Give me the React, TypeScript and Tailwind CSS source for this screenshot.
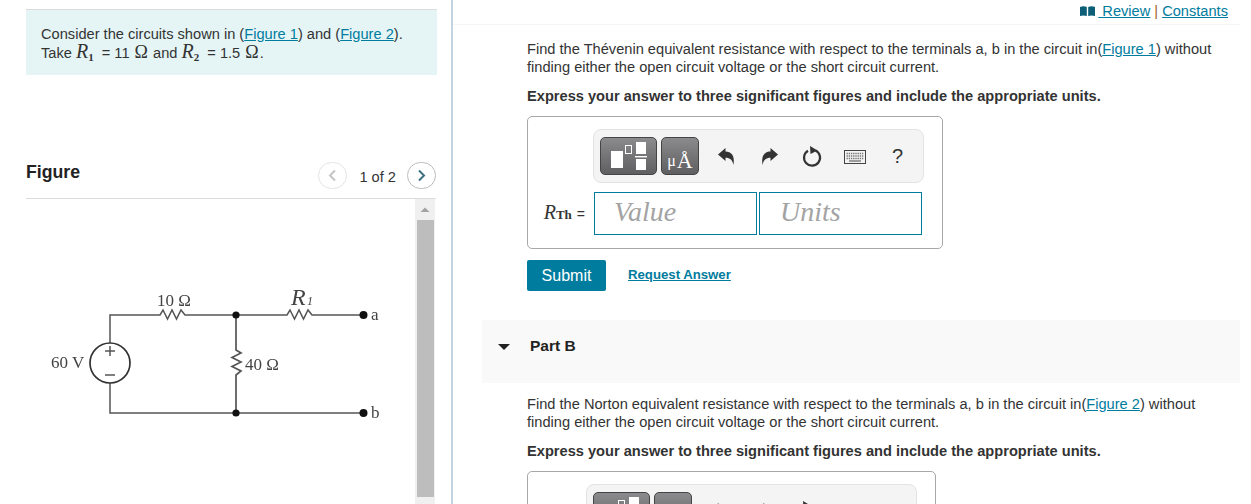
import React from 'react';

const font = { fontFamily: '"Liberation Sans", Arial, sans-serif' };

const Math1: React.FC<{ base: string; sub: string }> = ({ base, sub }) => (
  <span className="mr-[4px] font-['Liberation_Serif',serif] text-[#333]">
    <span className="text-[20px] italic">{base}</span>
    <span className="relative top-[3px] text-[11px] font-semibold">{sub}</span>
  </span>
);

const Ohm = () => <span className="mx-[1px] font-['Liberation_Serif',serif] text-[18px]">Ω</span>;

const UndoIcon = () => (
  <svg width="17" height="17" viewBox="0 0 17 17">
    <path d="M0 6.500 L7.500 0 L7.500 3.500 C13 3.500 17 7 15.500 17 C14.500 12 12 9.800 7.500 9.800 L7.500 13 Z" fill="#333" />
  </svg>
);

const RedoIcon = () => (
  <svg width="17" height="17" viewBox="0 0 17 17">
    <path d="M17 6.500 L9.500 0 L9.500 3.500 C4 3.500 0 7 1.500 17 C2.500 12 5 9.800 9.500 9.800 L9.500 13 Z" fill="#333" />
  </svg>
);

const ResetIcon = () => (
  <svg width="20" height="21" viewBox="0 0 20 21">
    <path d="M6 4.800 A8 8 0 1 0 13.500 4.500" fill="none" stroke="#333" strokeWidth="2.200" />
    <path d="M8 0 L15.500 4.500 L8.500 8 Z" fill="#333" />
  </svg>
);

const KeyboardIcon = () => (
  <svg width="22" height="14" viewBox="0 0 22 14" className="mt-[2px]">
    <rect x="0.500" y="0.500" width="21" height="13" fill="#f4f4f4" stroke="#444" />
    <path d="M2.500 3.500 H19.500 M2.500 6 H19.500 M2.500 8.500 H19.500" stroke="#777" strokeWidth="1.400" strokeDasharray="1.400 0.800" />
    <path d="M5 11 H17" stroke="#777" strokeWidth="1.400" />
  </svg>
);

const TemplateIcon = () => (
  <svg width="36" height="28" viewBox="0 0 36 28">
    <rect x="0" y="9" width="12" height="17" fill="#fff" />
    <rect x="14.500" y="3.500" width="6" height="8" fill="none" stroke="#fff" />
    <rect x="25" y="0" width="10" height="12" fill="#fff" />
    <rect x="24" y="14" width="12" height="1.400" fill="#fff" />
    <rect x="25" y="17" width="10" height="11" fill="#fff" />
  </svg>
);

const AnswerBox: React.FC<{ label?: React.ReactNode; width: string; pad: string }> = ({ label, width, pad }) => (
  <div className={`mt-[11px] h-[133px] shrink-0 rounded-[5px] border border-[#a8a8a8] bg-white ${width}`}>
    <div className={`mt-3 flex h-[54px] w-[331px] items-center rounded-[8px] border border-[#e3e3e3] bg-[#f4f4f4] pl-[6px] ${pad}`}>
      <div className="flex h-[38px] w-[57px] items-center justify-center rounded-[5px] border border-[#444] bg-gradient-to-b from-[#8b8a8d] to-[#5f5e60]">
        <TemplateIcon />
      </div>
      <div className="ml-[4px] flex h-[38px] w-[38px] items-end justify-center gap-[1px] rounded-[5px] border border-[#444] bg-gradient-to-b from-[#8b8a8d] to-[#5f5e60] pb-[3px] font-['Liberation_Serif',serif] text-white">
        <span className="text-[16px] leading-[20px]">μ</span>
        <span className="text-[22px] leading-[20px]">Å</span>
      </div>
      <div className="ml-[19px] flex w-[17px] justify-center"><UndoIcon /></div>
      <div className="ml-[26px] flex w-[17px] justify-center"><RedoIcon /></div>
      <div className="ml-[24px] flex w-[20px] justify-center"><ResetIcon /></div>
      <div className="ml-[22px] flex w-[22px] justify-center"><KeyboardIcon /></div>
      <div className="ml-[26px] text-[20px] leading-none text-[#333]">?</div>
    </div>
    <div className="mt-[9px] flex items-center">
      <div className="flex w-[66px] justify-end pr-[9px] text-[14px]">{label}</div>
      <div className="flex h-[43px] w-[163px] items-center border border-[#007c9e] pb-[3px] pl-[19px] font-['Liberation_Serif',serif] text-[28px] italic text-[#a3a3a3]">Value</div>
      <div className="ml-[2px] flex h-[43px] w-[163px] items-center border border-[#007c9e] pb-[3px] pl-[20px] font-['Liberation_Serif',serif] text-[28px] italic text-[#a3a3a3]">Units</div>
    </div>
  </div>
);

const Link: React.FC<{ children: React.ReactNode; className?: string }> = ({ children, className }) => (
  <a className={`cursor-pointer text-[#007c9e] underline ${className ?? ''}`}>{children}</a>
);

const Circuit = () => (
  <svg width="389" height="305" viewBox="0 0 389 305" className="shrink-0 blur-[0.3px]">
    <g transform="translate(-26,-199)" fill="none" stroke="#555" strokeWidth="1.500">
      <path d="M110 343 V315 H160 l3 -5 l4.500 9 l4.500 -9 l4.500 9 l4.500 -9 l4 5 H287 l3 -5 l4.500 9 l4.500 -9 l4.500 9 l4.500 -9 l4 5 H363" />
      <path d="M236 315 V350 l5 3 l-9 4.500 l9 4.500 l-9 4.500 l9 4.500 l-5 4 V413" strokeWidth="1.700" />
      <path d="M110 383 V413 H363" />
      <circle cx="110" cy="363" r="20" strokeWidth="1.700" stroke="#333" />
      <path d="M110 346 V356 M105 351 H115 M105 375 H115" />
      <circle cx="236" cy="315" r="3.600" fill="#111" stroke="none" />
      <circle cx="236" cy="413" r="3.600" fill="#111" stroke="none" />
      <circle cx="363.500" cy="315" r="4" fill="#111" stroke="none" />
      <circle cx="363.500" cy="413" r="4" fill="#111" stroke="none" />
      <g fill="#444" stroke="none" fontFamily="'Liberation Serif', serif" fontSize="17">
        <text x="157" y="306">10 Ω</text>
        <text x="291" y="305" fontSize="24" fontStyle="italic">R</text>
        <text x="307" y="305" fontSize="12" fontStyle="italic">1</text>
        <text x="371" y="320">a</text>
        <text x="371" y="418">b</text>
        <text x="51" y="368">60 V</text>
        <text x="245" y="370">40 Ω</text>
      </g>
    </g>
  </svg>
);

export default function App() {
  return (
    <div className="flex h-[504px] w-[1251px] overflow-hidden bg-white text-[14.63px] leading-[18px] text-[#333]" style={font}>
      {/* Left column */}
      <div className="h-full w-[453px] shrink-0 border-r-2 border-[#c3d3e2] pl-[26px] pr-[14px] pt-[9px]">
        <div className="h-[66px] w-[411px] border-t border-[#dcdcdc] bg-[#e5f5f6] pl-[15px] pt-[16px] leading-[17px]">
          <div>
            Consider the circuits shown in (<Link>Figure 1</Link>) and (<Link>Figure 2</Link>).
          </div>
          <div className="whitespace-nowrap">
            Take <Math1 base="R" sub="1" /> = 11 <Ohm /> and <Math1 base="R" sub="2" /> = 1.5 <Ohm />.
          </div>
        </div>

        <div className="mt-[85px] flex h-[39px] w-[410px] items-start justify-between border-b border-[#dcdcdc]">
          <div className="mt-[1px] text-[17.7px] font-bold leading-[22px] text-[#222]">Figure</div>
          <div className="flex items-center pt-[2px]">
            <div className="flex h-[27px] w-[29px] items-center justify-center rounded-full border border-[#e4e4e4]">
              <svg width="9" height="13" viewBox="0 0 9 13"><path d="M7 1.500 L2 6.500 L7 11.500" fill="none" stroke="#c4c4c4" strokeWidth="2" /></svg>
            </div>
            <span className="ml-[12px] mr-[11px] mt-[2px] text-[#333]">1 of 2</span>
            <div className="flex h-[27px] w-[29px] items-center justify-center rounded-full border border-[#bdbdbd]">
              <svg width="9" height="13" viewBox="0 0 9 13"><path d="M2 1.500 L7 6.500 L2 11.500" fill="none" stroke="#3f6f82" strokeWidth="2" /></svg>
            </div>
          </div>
        </div>

        <div className="flex w-[410px]">
          <Circuit />
          <div className="flex h-[305px] w-[20px] shrink-0 flex-col items-center bg-[#f0f0f0]">
            <svg width="10" height="21" viewBox="0 0 10 21" className="shrink-0"><path d="M0.500 13 L5 8.500 L9.500 13 Z" fill="#a3a3a3" /></svg>
            <div className="h-[277px] w-[17px] bg-[#bdbdbd]" />
          </div>
        </div>
      </div>

      {/* Right column */}
      <div className="flex h-full flex-1 flex-col overflow-hidden">
        <div className="flex h-[25px] w-[787px] shrink-0 items-start justify-end border-b border-[#f5f5f5] pr-[12px] pt-[2px]">
          <svg width="15" height="10" viewBox="0 0 15 10" className="mr-[1px] mt-[4px]">
            <path d="M0 1 Q3.500 -0.500 6.800 1 V10 Q3.500 8.800 0 10 Z M8.200 1 Q11.500 -0.500 15 1 V10 Q11.500 8.800 8.200 10 Z" fill="#0d5f78" />
          </svg>
          <Link className="ml-[2px]">&nbsp;Review</Link>
          <span className="ml-[4px] mr-[4px] text-[#a0622d]">|</span>
          <Link>Constants</Link>
        </div>

        <div className="flex shrink-0 flex-col pl-[74px]">
          <p className="mt-[15px] w-[700px]">
            Find the Thévenin equivalent resistance with respect to the terminals a, b in the circuit in(<Link>Figure 1</Link>) without finding either the open circuit voltage or the short circuit current.
          </p>
          <p className="mt-[11px] font-bold">Express your answer to three significant figures and include the appropriate units.</p>
          <AnswerBox
            width="w-[416px]"
            pad="ml-[65px]"
            label={
              <span className="flex items-baseline">
                <span className="font-['Liberation_Serif',serif] text-[20px] italic">R</span>
                <span className="font-['Liberation_Serif',serif] text-[13px] font-semibold">Th</span>
                <span className="ml-[5px]">=</span>
              </span>
            }
          />
          <div className="mt-[11px] flex items-center">
            <div className="flex h-[31px] w-[79px] items-center justify-center rounded-[2px] bg-[#007c9e] text-[16px] text-white">Submit</div>
            <Link className="ml-[22px] mb-[2px] text-[13.2px] font-bold">Request Answer</Link>
          </div>
        </div>

        <div className="ml-[29px] mt-[29px] flex h-[63px] w-[758px] shrink-0 bg-[#f9f9f9] pl-[16px] pt-[18px]">
          <svg width="12" height="6" viewBox="0 0 12 6" className="mt-[6px]"><path d="M0 0 H12 L6 6 Z" fill="#222" /></svg>
          <span className="ml-[20px] text-[15.5px] font-bold leading-[16px] text-[#222]">Part B</span>
        </div>

        <div className="flex shrink-0 flex-col pl-[74px]">
          <p className="mt-[12px] w-[700px]">
            Find the Norton equivalent resistance with respect to the terminals a, b in the circuit in(<Link>Figure 2</Link>) without finding either the open circuit voltage or the short circuit current.
          </p>
          <p className="mt-[11px] font-bold">Express your answer to three significant figures and include the appropriate units.</p>
          <AnswerBox width="w-[409px]" pad="ml-[58px]" />
        </div>
      </div>
    </div>
  );
}
